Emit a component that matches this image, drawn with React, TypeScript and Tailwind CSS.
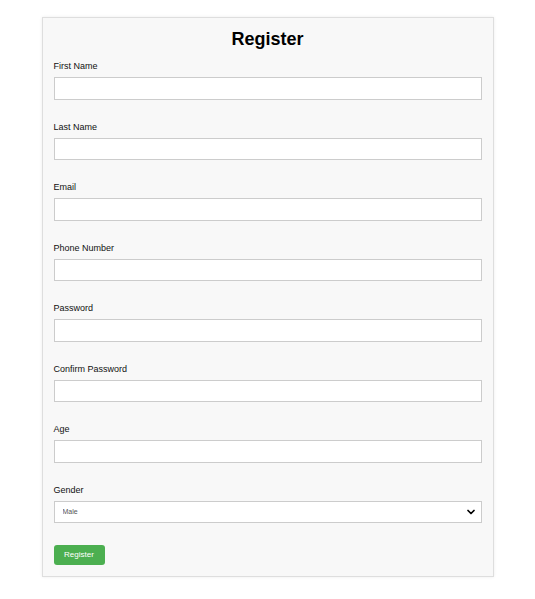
import { ChevronDown } from "lucide-react";

const fields = [
    { label: "First Name", type: "text" },
    { label: "Last Name", type: "text" },
    { label: "Email", type: "email" },
    { label: "Phone Number", type: "tel" },
    { label: "Password", type: "password" },
    { label: "Confirm Password", type: "password" },
    { label: "Age", type: "number" },
];

export default function App() {
    return (
        <div className="min-h-screen bg-white pt-[17px] font-['Liberation_Sans',Arial,sans-serif]">
            <form
                className="mx-auto w-[452px] border border-[#dedede] bg-[#f8f8f8] px-[11px] pt-[11px] pb-[11px] shadow-[0_0_3px_rgba(0,0,0,0.08)]"
                onSubmit={(e) => e.preventDefault()}
            >
                <h2 className="mb-[12px] text-center text-[18px] leading-[20px] font-bold text-black">Register</h2>

                {fields.map((f) => (
                    <div key={f.label} className="mb-[22px]">
                        <label className="mb-[5px] block text-[9px] leading-[11px] text-[#111]">{f.label}</label>
                        <input type={f.type} className="block h-[22.5px] w-full border border-[#cccccc] bg-white px-2 text-[9px] outline-none" />
                    </div>
                ))}

                <div className="mb-[22px]">
                    <label className="mb-[5px] block text-[9px] leading-[11px] text-[#111]">Gender</label>
                    <div className="relative">
                        <select className="block h-[22.5px] w-full appearance-none border border-[#cccccc] bg-white px-[8px] text-[7px] text-[#555] outline-none">
                            <option>Male</option>
                            <option>Female</option>
                            <option>Other</option>
                        </select>
                        <ChevronDown className="pointer-events-none absolute top-1/2 right-[5px] h-[12px] w-[12px] -translate-y-1/2 text-black" strokeWidth={3.5} />
                    </div>
                </div>

                <button type="submit" className="block h-[20px] w-[51px] rounded-[3px] bg-[#4caf50] text-[8px] text-white">
                    Register
                </button>
            </form>
        </div>
    );
}
